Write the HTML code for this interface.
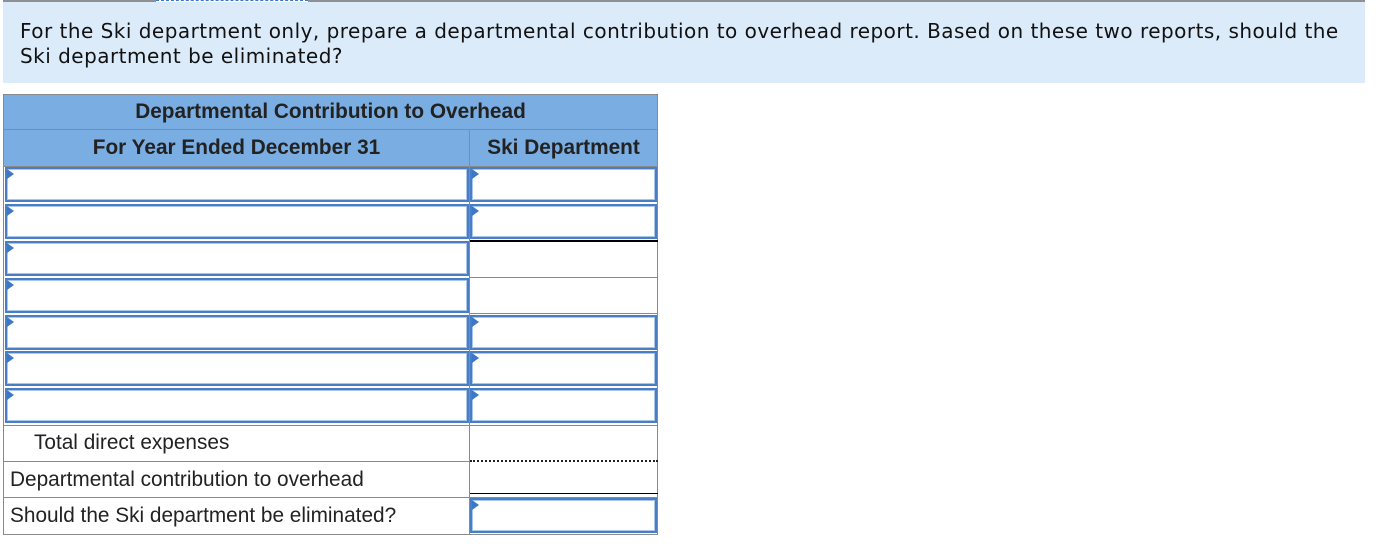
<!DOCTYPE html>
<html><head><style>
body{margin:0;width:1396px;height:544px;background:#fff;position:relative;overflow:hidden;font-family:"Liberation Sans",Arial,sans-serif}
.topline{position:absolute;left:3px;top:0;width:1362px;height:2px;background:#8e9094}
.dash{position:absolute;left:156px;top:0;width:152px;height:2px;border-top:1px dashed #3b78c7;background:#fff}
.q{position:absolute;left:3px;top:2px;width:1362px;height:81px;background:#dbebfa}
.q p{margin:0;position:absolute;left:17px;top:17px;font-family:"DejaVu Sans",Verdana,sans-serif;font-size:20px;line-height:25px;color:#111;width:1330px;letter-spacing:0.48px}
.a{position:absolute;box-sizing:border-box}
.h{background:#7aade2;border:1px solid #8a8a8a;font-weight:bold;font-size:20.8px;color:#222;text-align:center}
.c{border:1px solid #8a8a8a;background:#fff;font-size:20.8px;color:#222;white-space:nowrap}
.in{border:2px solid #4a7ec4;box-shadow:inset 0 0 0 1px #a8c6ea;background:#fff}
.in::before{content:"";position:absolute;left:0;top:0;border-left:7px solid #3b78c7;border-top:5px solid transparent;border-bottom:5px solid transparent}
</style></head><body>
<div class="topline"></div><div class="dash"></div>
<div class="q"><p>For the Ski department only, prepare a departmental contribution to overhead report. Based on these two reports, should the<br>Ski department be eliminated?</p></div>

<div class="a h" style="left:3px;top:94px;width:655px;height:36px;line-height:34px">Departmental Contribution to Overhead</div>
<div class="a h" style="left:3px;top:129px;width:467px;height:38px;line-height:36px">For Year Ended December 31</div>
<div class="a h" style="left:469px;top:129px;width:189px;height:38px;line-height:36px">Ski Department</div>

<div class="a c" style="left:3px;top:166px;width:467px;height:260px"></div>
<div class="a c" style="left:469px;top:166px;width:189px;height:260px"></div>

<div class="a in" style="left:5px;top:167px;width:464px;height:35px"></div>
<div class="a in" style="left:470px;top:167px;width:187px;height:35px"></div>
<div class="a in" style="left:5px;top:204px;width:464px;height:35px"></div>
<div class="a in" style="left:470px;top:204px;width:187px;height:35px"></div>
<div class="a" style="left:470px;top:240px;width:188px;height:2px;background:#000"></div>
<div class="a in" style="left:5px;top:241px;width:464px;height:35px"></div>
<div class="a" style="left:470px;top:277px;width:188px;height:1px;background:#8a8a8a"></div>
<div class="a in" style="left:5px;top:278px;width:464px;height:35px"></div>
<div class="a" style="left:470px;top:313px;width:188px;height:1px;background:#8a8a8a"></div>
<div class="a in" style="left:5px;top:315px;width:464px;height:35px"></div>
<div class="a in" style="left:470px;top:315px;width:187px;height:35px"></div>
<div class="a in" style="left:5px;top:351px;width:464px;height:35px"></div>
<div class="a in" style="left:470px;top:351px;width:187px;height:35px"></div>
<div class="a in" style="left:5px;top:388px;width:464px;height:35px"></div>
<div class="a in" style="left:470px;top:388px;width:187px;height:35px"></div>

<div class="a c" style="left:3px;top:425px;width:467px;height:37px;line-height:34px;padding-left:30px">Total direct expenses</div>
<div class="a c" style="left:469px;top:425px;width:189px;height:37px;border-bottom:none"></div>
<div class="a" style="left:470px;top:460px;width:188px;height:0;border-top:2px dotted #222"></div>
<div class="a c" style="left:3px;top:461px;width:467px;height:37px;line-height:35px;padding-left:6px">Departmental contribution to overhead</div>
<div class="a c" style="left:469px;top:462px;width:189px;height:35px;border-top:none;border-bottom:none"></div>
<div class="a" style="left:470px;top:493px;width:188px;height:5px;border-top:1px solid #000;border-bottom:1px solid #000;box-sizing:border-box"></div>
<div class="a c" style="left:3px;top:497px;width:467px;height:38px;line-height:36px;padding-left:6px">Should the Ski department be eliminated?</div>
<div class="a c" style="left:469px;top:497px;width:189px;height:38px"></div>
<div class="a in" style="left:470px;top:498px;width:187px;height:35px"></div>
</body></html>
